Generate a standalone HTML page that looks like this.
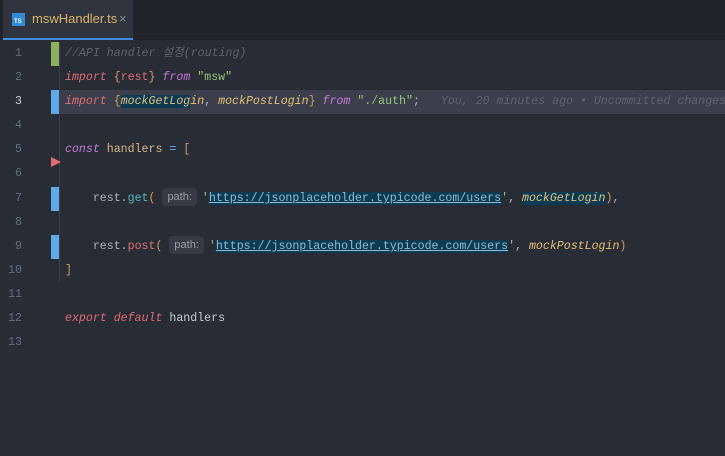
<!DOCTYPE html>
<html><head><meta charset="utf-8"><style>
*{margin:0;padding:0;box-sizing:border-box}
body{width:725px;height:456px;background:#282c34;overflow:hidden;position:relative;font-family:"Liberation Mono","Noto Sans CJK KR",monospace;font-size:11.6px;color:#abb2bf}
.tabbar{position:absolute;left:0;top:0;width:725px;height:40px;background:#21252b;border-bottom:1px solid #1b1e23}
.tab{position:absolute;left:3px;top:0;width:130px;height:40px;background:#2f343e;border-bottom:2px solid #3d8ee6}
.ts{position:absolute;left:9px;top:13px;width:13px;height:13px;background:#2f8ad8;color:#fff;font:bold 6px "Liberation Sans",sans-serif;padding:6px 0 0 2px;line-height:6px}
.tname{position:absolute;left:29px;top:11px;font:13px "Liberation Sans",sans-serif;color:#d7b46a}
.tx{position:absolute;left:116px;top:11px;font:13px "Liberation Sans",sans-serif;color:#8a909a}
.row{position:absolute;left:0;width:725px;height:24px;line-height:24px;white-space:pre}
.num{position:absolute;left:0;width:22px;text-align:right;color:#636d83}
.code{position:absolute;left:65px}
.hl{background:#3a3f4b}
.mk{position:absolute;left:51px;width:8px;height:24px}
.c{color:#5c6370;font-style:italic}
.k{color:#e06c75;font-style:italic}
.p{color:#c678dd;font-style:italic}
.y{color:#d19a66}
.s{color:#98c379}
.w{color:#e5c07b}
.i{font-style:italic;color:#e5c07b}
.b{color:#61afef}
.sel{background:#0c3a52}
.u{text-decoration:underline;color:#8fbcd4}
.hint{display:inline-block;background:#353a44;color:#9aa2ae;font:11px "Liberation Sans",sans-serif;line-height:18px;padding:0 5px;border-radius:4px;margin-right:5px;vertical-align:1px}
.blame{color:#5c6370;font-style:italic}
</style></head><body>
<div class="tabbar"><div class="tab"><div class="ts">TS</div><div class="tname">mswHandler.ts</div><div class="tx">×</div></div></div>
<div style="position:absolute;left:59px;top:42px;width:1px;height:240px;background:#3a3f4b"></div>

<div class="row" style="top:42px"><span class="num">1</span><span class="mk" style="background:#8db05c"></span><span class="code c">//API handler 설정(routing)</span></div>
<div class="row" style="top:66px"><span class="num">2</span><span class="code"><span class="k">import</span> <span class="y">{</span><span class="k" style="font-style:normal">rest</span><span class="y">}</span> <span class="p">from</span> <span class="s">"msw"</span></span></div>
<div class="row hl" style="top:90px;left:60px;width:665px"></div>
<div class="row" style="top:90px"><span class="num" style="color:#c8ccd4">3</span><span class="mk" style="background:#5ea9e8"></span><span class="code"><span class="k">import</span> <span class="y">{</span><span class="sel"><span class="i">mockGetLog</span></span><span class="i">in</span>, <span class="i">mockPostLogin</span><span class="y">}</span> <span class="p">from</span> <span class="s">"./auth"</span>;   <span class="blame">You, 20 minutes ago • Uncommitted changes</span></span></div>
<div class="row" style="top:114px"><span class="num">4</span></div>
<div class="row" style="top:138px"><span class="num">5</span><span class="code"><span class="p">const</span> <span class="w" style="color:#d4b88c">handlers</span> <span class="b">=</span> <span class="y">[</span></span></div>
<div style="position:absolute;left:51px;top:157px;width:0;height:0;border-top:5px solid transparent;border-bottom:5px solid transparent;border-left:10px solid #e06c75"></div>
<div class="row" style="top:162px"><span class="num">6</span></div>
<div class="row" style="top:187px"><span class="num">7</span><span class="mk" style="background:#5ea9e8"></span><span class="code">    rest.<span class="b" style="color:#56b6c2">get</span><span class="y">(</span> <span class="hint">path:</span><span class="s">'</span><span class="sel"><span class="u">https://jsonplaceholder.typicode.com/users</span></span><span class="s">'</span>, <span class="sel"><span class="i">mockGetLogin</span></span><span class="y">)</span>,</span></div>
<div class="row" style="top:211px"><span class="num">8</span></div>
<div class="row" style="top:235px"><span class="num">9</span><span class="mk" style="background:#5ea9e8"></span><span class="code">    rest.<span style="color:#e06c75">post</span><span class="y">(</span> <span class="hint">path:</span><span class="s">'</span><span class="sel"><span class="u">https://jsonplaceholder.typicode.com/users</span></span><span class="s">'</span>, <span class="i">mockPostLogin</span><span class="y">)</span></span></div>
<div class="row" style="top:259px"><span class="num">10</span><span class="code y">]</span></div>
<div class="row" style="top:283px"><span class="num">11</span></div>
<div class="row" style="top:307px"><span class="num">12</span><span class="code"><span class="k">export</span> <span class="k">default</span> <span style="color:#c8ccd4">handlers</span></span></div>
<div class="row" style="top:331px"><span class="num">13</span></div>
</body></html>
